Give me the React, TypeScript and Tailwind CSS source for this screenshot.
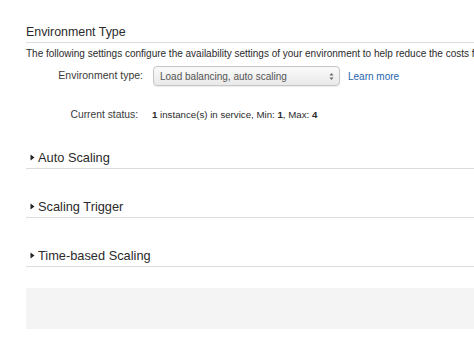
import React from 'react'

const font = { fontFamily: '"Liberation Sans", Arial, sans-serif' }

function Caret() {
  return (
    <svg width="5" height="7" viewBox="0 0 5 7" className="shrink-0">
      <path d="M0.5 0.5 L4.5 3.5 L0.5 6.5 Z" fill="#222" />
    </svg>
  )
}

function Section({ title }: { title: string }) {
  return (
    <div className="flex h-[22px] items-center gap-[3px] border-b border-[#dcdcdc] pl-[4px]">
      <Caret />
      <span className="text-[12.8px] text-[#2b2b2b]">{title}</span>
    </div>
  )
}

export default function App() {
  return (
    <div className="h-[349px] w-[474px] overflow-hidden bg-white" style={font}>
      <div className="pl-[26px] pt-[23px]">
        <div className="flex h-[20px] items-center border-b border-[#dcdcdc] text-[12.4px] text-[#2b2b2b]">
          Environment Type
        </div>
      </div>
      <p className="mt-[4px] h-[14px] overflow-hidden whitespace-nowrap pl-[26px] text-[10px] leading-[14px] text-[#2b2b2b]">
        The following settings configure the availability settings of your environment to help reduce the costs for your
      </p>

      <div className="mt-[5px] flex h-[20px] items-center">
        <span className="w-[143px] shrink-0 text-right text-[10.5px] text-[#3a3a3a]">Environment type:</span>
        <div className="ml-[10px] flex h-[20px] w-[187px] items-center justify-between rounded-[4px] border border-[#c6c6c6] bg-gradient-to-b from-[#fafafa] to-[#e9e9e9] pl-[6px] pr-[5px] shadow-[0_1px_1px_rgba(0,0,0,0.08)]">
          <span className="text-[10px] text-[#555]">Load balancing, auto scaling</span>
          <svg width="5" height="9" viewBox="0 0 5 9">
            <path d="M0.5 3.5 L2.5 1 L4.5 3.5 Z" fill="#666" />
            <path d="M0.5 5.5 L2.5 8 L4.5 5.5 Z" fill="#666" />
          </svg>
        </div>
        <span className="ml-[8px] text-[10px] text-[#1f64ad]">Learn more</span>
      </div>

      <div className="mt-[22px] flex h-[14px] items-center">
        <span className="w-[138px] shrink-0 text-right text-[10.3px] text-[#3a3a3a]">Current status:</span>
        <span className="ml-[14px] text-[9.7px] text-[#2b2b2b]">
          <b>1</b> instance(s) in service, Min: <b>1</b>, Max: <b>4</b>
        </span>
      </div>

      <div className="pl-[26px]">
        <div className="mt-[25px]">
          <Section title="Auto Scaling" />
        </div>
        <div className="mt-[27px]">
          <Section title="Scaling Trigger" />
        </div>
        <div className="mt-[27px]">
          <Section title="Time-based Scaling" />
        </div>
        <div className="mt-[21px] h-[41px] bg-[#f4f4f4]" />
      </div>
    </div>
  )
}
